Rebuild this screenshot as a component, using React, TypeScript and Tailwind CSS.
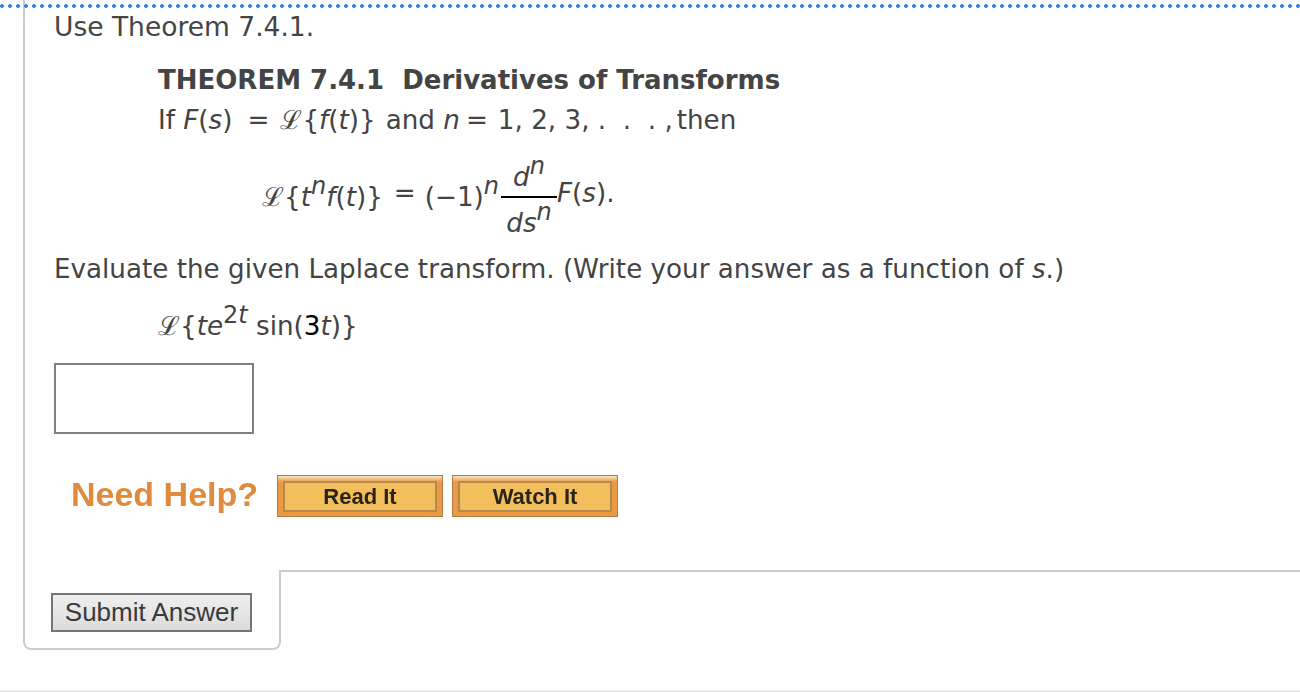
const body = "font-['DejaVu_Sans',Verdana,sans-serif] text-[#444444]";

function HelpButton({ label }: { label: string }) {
  return (
    <button className="h-[42px] w-[166px] border border-[#b07c42] bg-[linear-gradient(#f8e4c4,#ea9a44_6px)] p-[5px]">
      <span className="flex h-[31px] items-center justify-center border-2 border-[#b58a4c] bg-[#f3bf5d] font-['Liberation_Sans',Arial,sans-serif] text-[22px] font-bold text-[#2a2418]">
        <span className="blur-[0.4px]">{label}</span>
      </span>
    </button>
  );
}

function Sup({ children }: { children: React.ReactNode }) {
  return <sup className="relative top-[-2px] align-super text-[24px] leading-none">{children}</sup>;
}

function Script() {
  return <span className="font-['Liberation_Sans',sans-serif]">ℒ</span>;
}

export default function App() {
  return (
    <div className={`relative h-[692px] w-[1300px] overflow-hidden bg-white text-[26.2px] leading-none ${body}`}>
      <div className="absolute inset-x-0 top-[4px] h-[4px] bg-[radial-gradient(circle,#3b82e6_1.8px,transparent_2.2px)] bg-[length:8px_4px] bg-[position:-2px_0] bg-repeat-x" />

      <div className="ml-[23px] h-[570px] border-l-2 border-[#cccccc] pl-[29px] pt-[10px]">
        <p className="flex h-[34px] items-center text-[26.5px]">Use Theorem 7.4.1.</p>

        <div className="ml-[104px] mt-[19px]">
          <p className="flex h-[34px] items-center text-[26px] font-bold">THEOREM 7.4.1&nbsp; Derivatives of Transforms</p>
          <p className="mt-[6px] flex h-[34px] items-center whitespace-pre">
            <span>If <i>F</i>(<i>s</i>)</span>
            <span className="ml-[15px]">=</span>
            <span className="ml-[11px]"><Script />{"{"}<i>f</i>(<i>t</i>){"}"}</span>
            <span className="ml-[10px]">and <i>n</i></span>
            <span className="ml-[6px]">=</span>
            <span className="ml-[10px]">1, 2, 3, .  .  . ,</span>
            <span className="ml-[4px]">then</span>
          </p>
          <div className="ml-[104px] mt-[17px] flex h-[84px] items-center whitespace-pre">
            <span className="mb-[6px]">
              <Script />{"{"}<i>t</i><Sup><i>n</i></Sup><i>f</i>(<i>t</i>){"}"}
            </span>
            <span className="mb-[6px] ml-[11px]">=</span>
            <span className="mb-[6px] ml-[9px]">(−1)<Sup><i>n</i></Sup></span>
            <span className="ml-[2px] inline-flex w-[56px] flex-col items-center">
              <span className="w-full border-b-2 border-black pb-[6px] text-center"><i>d</i><Sup><i>n</i></Sup></span>
              <span className="pt-[4px]"><i>ds</i><Sup><i>n</i></Sup></span>
            </span>
            <span className="mb-[6px]"><i>F</i>(<i>s</i>).</span>
          </div>
        </div>

        <p className="mt-[14px] flex h-[34px] items-center whitespace-pre">
          Evaluate the given Laplace transform. (Write your answer as a function of <i>s</i>.)
        </p>

        <p className="ml-[104px] mt-[21px] flex h-[34px] items-center whitespace-pre">
          <span className="mb-[4px]">
            <Script />{"{"}<i>te</i><Sup>2<i>t</i></Sup> sin(<span className="text-black">3</span><i>t</i>){"}"}
          </span>
        </p>

        <div className="mt-[22px] h-[71px] w-[200px] border-2 border-[#808080] bg-white" />

        <div className="ml-[17px] mt-[41px] flex items-center">
          <span className="mb-[4px] w-[206px] font-['Liberation_Sans',Arial,sans-serif] text-[34px] font-bold text-[#e08a3e] blur-[0.5px]">Need Help?</span>
          <div className="flex gap-[9px]">
            <HelpButton label="Read It" />
            <HelpButton label="Watch It" />
          </div>
        </div>
      </div>

      <div className="flex h-[80px]">
        <div className="ml-[23px] flex h-[80px] w-[258px] items-start rounded-b-lg border-x-2 border-b-2 border-[#cccccc] pl-[26px] pt-[23px]">
          <button className="h-[39px] w-[201px] border-2 border-[#757575] bg-[linear-gradient(#efefef,#dcdcdc)] pb-[2px] font-['Liberation_Sans',Arial,sans-serif] text-[26px] text-[#3a3a3a]">
            Submit Answer
          </button>
        </div>
        <div className="flex-1 border-t-2 border-[#cccccc]" />
      </div>

      <div className="mt-[40px] h-[2px] bg-[#e8e8e8]" />
    </div>
  );
}
